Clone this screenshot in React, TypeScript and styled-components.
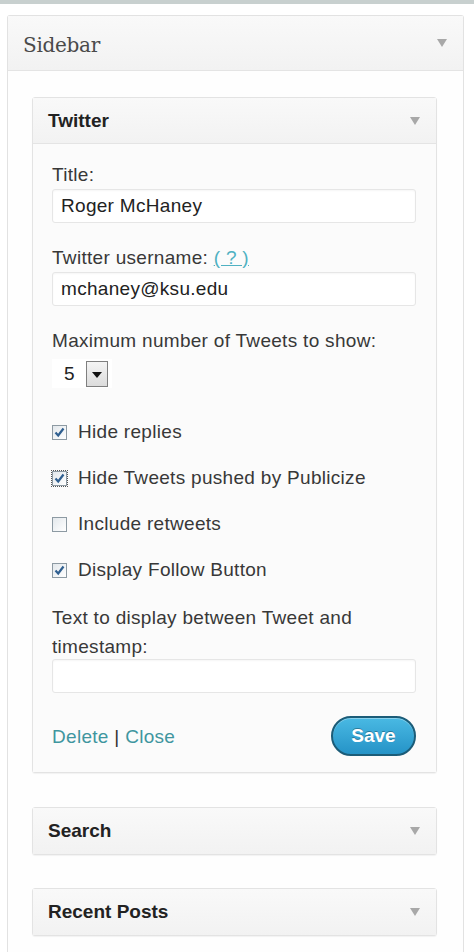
import React from "react";
import styled, { createGlobalStyle } from "styled-components";

const Global = createGlobalStyle`
  html, body { margin: 0; padding: 0; background: #ffffff; }
  body { font-family: "Liberation Sans", Arial, sans-serif; color: #333; }
`;

const Page = styled.div`
  width: 474px;
  height: 952px;
  overflow: hidden;
  background: #fff;
`;

const TopStrip = styled.div`
  height: 4px;
  background: #c8d0cf;
`;

const Panel = styled.section`
  margin: 11px 10px 0 7px;
  border: 1px solid #e2e2e2;
  border-bottom: none;
  border-radius: 3px 3px 0 0;
  height: 960px;
  background: #fefefe;
`;

const PanelHeader = styled.div`
  height: 54px;
  display: flex;
  align-items: center;
  justify-content: space-between;
  padding: 0 16px 0 15px;
  background: linear-gradient(#f9f9f9, #f2f2f2);
  border-bottom: 1px solid #e4e4e4;
`;

const PanelTitle = styled.h2`
  margin: 0;
  font-family: "DejaVu Serif", "Liberation Serif", serif;
  font-weight: normal;
  font-size: 20px;
  letter-spacing: -0.3px;
  color: #4a4a4a;
  padding-top: 4px;
`;

const PanelBody = styled.div`
  padding: 26px 26px 0 24px;
  display: flex;
  flex-direction: column;
`;

const Widget = styled.div<{ $gap?: number }>`
  border: 1px solid #e3e3e3;
  border-radius: 3px;
  background: #fafafa;
  box-shadow: 0 1px 1px rgba(0, 0, 0, 0.05);
  margin-bottom: ${(p) => p.$gap ?? 0}px;
`;

const WidgetHeader = styled.div<{ $open?: boolean; $h: number }>`
  height: ${(p) => p.$h}px;
  display: flex;
  align-items: center;
  justify-content: space-between;
  padding: 0 16px 0 15px;
  background: linear-gradient(#f9f9f9, #f2f2f2);
  border-bottom: ${(p) => (p.$open ? "1px solid #e4e4e4" : "none")};
`;

const WidgetTitle = styled.h3`
  margin: 0;
  font-size: 19px;
  font-weight: bold;
  color: #222;
`;

const Arrow = styled.span`
  width: 0;
  height: 0;
  border-left: 5px solid transparent;
  border-right: 5px solid transparent;
  border-top: 8px solid #a8a8a8;
`;

const WidgetBody = styled.div`
  padding: 21px 20px 16px 19px;
  display: flex;
  flex-direction: column;
  background: #fbfbfb;
  font-size: 19px;
  letter-spacing: 0.3px;
`;

const Label = styled.label<{ $mt?: number }>`
  line-height: 20px;
  color: #383838;
  margin-top: ${(p) => p.$mt ?? 0}px;
`;

const HelpLink = styled.a`
  color: #4fb1c2;
  text-decoration: underline;
`;

const TextInput = styled.div<{ $mt?: number }>`
  margin-top: ${(p) => p.$mt ?? 4}px;
  height: 34px;
  box-sizing: border-box;
  border: 1px solid #e6e6e6;
  border-radius: 3px;
  background: #fff;
  box-shadow: inset 0 1px 2px rgba(0, 0, 0, 0.04);
  display: flex;
  align-items: center;
  padding: 0 8px;
  color: #222;
`;

const Select = styled.div`
  margin-top: 8px;
  width: 60px;
  height: 29px;
  box-sizing: border-box;
  background: #fff;
  display: flex;
  align-items: center;
  justify-content: space-between;
  padding: 0 4px 0 12px;
  color: #222;
`;

const SelectButton = styled.span`
  width: 22px;
  height: 26px;
  box-sizing: border-box;
  border: 1px solid #7f7f7f;
  background: linear-gradient(#f4f4f4, #dcdcdc);
  display: flex;
  align-items: center;
  justify-content: center;
  &::after {
    content: "";
    border-left: 5px solid transparent;
    border-right: 5px solid transparent;
    border-top: 6px solid #111;
    margin-top: 2px;
  }
`;

const CheckList = styled.div`
  margin-top: 34px;
  display: flex;
  flex-direction: column;
  gap: 26px;
`;

const CheckRow = styled.div`
  display: flex;
  align-items: center;
  height: 20px;
  color: #383838;
  gap: 11px;
`;

const Box = styled.span<{ $focus?: boolean }>`
  width: 15px;
  height: 15px;
  box-sizing: border-box;
  border: 1px solid #8d9aa3;
  background: linear-gradient(135deg, #e3e8ec, #ffffff);
  display: flex;
  align-items: center;
  justify-content: center;
  outline: ${(p) => (p.$focus ? "1px dotted #555" : "none")};
  outline-offset: 0px;
  flex-shrink: 0;
`;

const Check = ({ on, focus }: { on: boolean; focus?: boolean }) => (
  <Box $focus={focus}>
    {on && (
      <svg width="11" height="11" viewBox="0 0 11 11">
        <path d="M1.5 5.5 L4.2 8.5 L9.5 1.5" fill="none" stroke="#2f5f90" strokeWidth="2.2" />
      </svg>
    )}
  </Box>
);

const LongLabel = styled.div`
  margin-top: 23px;
  line-height: 29px;
  color: #383838;
`;

const Footer = styled.div`
  margin-top: 23px;
  display: flex;
  align-items: center;
  justify-content: space-between;
`;

const Links = styled.div`
  color: #333;
  padding-top: 1px;
`;

const ActionLink = styled.a`
  color: #3f969f;
  text-decoration: none;
`;

const SaveButton = styled.button`
  width: 85px;
  height: 40px;
  border-radius: 20px;
  border: 2px solid #1b5c78;
  background: linear-gradient(#49b9e3, #2593c7);
  color: #fff;
  font-family: "Liberation Sans", Arial, sans-serif;
  font-size: 19px;
  font-weight: bold;
  text-shadow: 0 -1px 0 rgba(0, 0, 0, 0.3);
  box-shadow: inset 0 1px 0 rgba(255, 255, 255, 0.35);
  padding: 0;
`;

export default function App() {
  return (
    <Page>
      <Global />
      <TopStrip />
      <Panel>
        <PanelHeader>
          <PanelTitle>Sidebar</PanelTitle>
          <Arrow />
        </PanelHeader>
        <PanelBody>
          <Widget $gap={34}>
            <WidgetHeader $open $h={45}>
              <WidgetTitle>Twitter</WidgetTitle>
              <Arrow />
            </WidgetHeader>
            <WidgetBody>
              <Label>Title:</Label>
              <TextInput>Roger McHaney</TextInput>
              <Label $mt={25}>
                Twitter username: <HelpLink>( ? )</HelpLink>
              </Label>
              <TextInput>mchaney@ksu.edu</TextInput>
              <Label $mt={25}>Maximum number of Tweets to show:</Label>
              <Select>
                5<SelectButton />
              </Select>
              <CheckList>
                <CheckRow>
                  <Check on />
                  Hide replies
                </CheckRow>
                <CheckRow>
                  <Check on focus />
                  Hide Tweets pushed by Publicize
                </CheckRow>
                <CheckRow>
                  <Check on={false} />
                  Include retweets
                </CheckRow>
                <CheckRow>
                  <Check on />
                  Display Follow Button
                </CheckRow>
              </CheckList>
              <LongLabel>
                Text to display between Tweet and
                <br />
                timestamp:
              </LongLabel>
              <TextInput $mt={-2}></TextInput>
              <Footer>
                <Links>
                  <ActionLink>Delete</ActionLink> | <ActionLink>Close</ActionLink>
                </Links>
                <SaveButton>Save</SaveButton>
              </Footer>
            </WidgetBody>
          </Widget>
          <Widget $gap={33}>
            <WidgetHeader $h={46}>
              <WidgetTitle>Search</WidgetTitle>
              <Arrow />
            </WidgetHeader>
          </Widget>
          <Widget>
            <WidgetHeader $h={46}>
              <WidgetTitle>Recent Posts</WidgetTitle>
              <Arrow />
            </WidgetHeader>
          </Widget>
        </PanelBody>
      </Panel>
    </Page>
  );
}
